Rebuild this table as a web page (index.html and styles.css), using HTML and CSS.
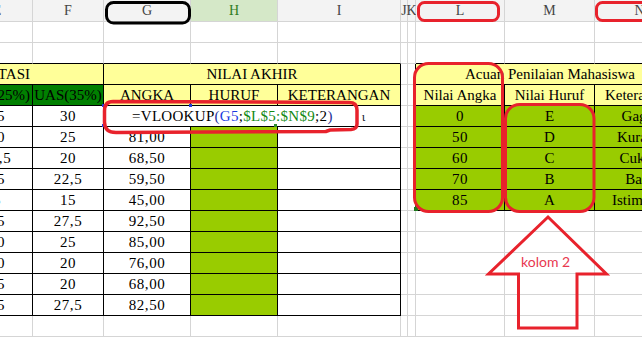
FILE: index.html
```html
<!DOCTYPE html>
<html>
<head>
<meta charset="utf-8">
<link rel="stylesheet" href="styles.css">
</head>
<body>
<div class="sheet">
  <!-- header row -->
  <div class="c hd">E</div><div class="c hd">F</div><div class="c hd">G</div><div class="c hd sel">H</div><div class="c hd">I</div><div class="c hd">J</div><div class="c hd">K</div><div class="c hd">L</div><div class="c hd">M</div><div class="c hd">N</div>
  <!-- row 1 -->
  <div class="c"></div><div class="c"></div><div class="c"></div><div class="c"></div><div class="c"></div><div class="c"></div><div class="c"></div><div class="c"></div><div class="c"></div><div class="c"></div>
  <!-- row 2 -->
  <div class="c kb"></div><div class="c kb"></div><div class="c kb"></div><div class="c kb"></div><div class="c kb"></div><div class="c"></div><div class="c"></div><div class="c kb"></div><div class="c kb"></div><div class="c kb"></div>
  <!-- row 3 -->
  <div class="c k y s2 tail">PRESENTASI</div><div class="c k y s3">NILAI AKHIR</div><div class="c"></div><div class="c kr"></div><div class="c k y s3">Acuan Penilaian Mahasiswa</div>
  <!-- row 4 -->
  <div class="c k dg">UTS(25%)</div><div class="c k dg">UAS(35%)</div><div class="c k y">ANGKA</div><div class="c k y">HURUF</div><div class="c k y">KETERANGAN</div><div class="c"></div><div class="c kr"></div><div class="c k y">Nilai Angka</div><div class="c k y">Nilai Huruf</div><div class="c k y">Keterangan</div>
  <!-- row 5 -->
  <div class="c k num">15</div><div class="c k num">30</div><div class="c k s3 edit">=VLOOKUP<span class="par">(</span><span class="ref1">G5</span>;<span class="ref2">$L$5:$N$9</span>;2<span class="par">)</span><span class="cur">ι</span></div><div class="c"></div><div class="c kg"></div><div class="c k g num">0</div><div class="c k g">E</div><div class="c k g">Gagal</div>
  <!-- row 6 -->
  <div class="c k num">20</div><div class="c k num">25</div><div class="c k num">81,00</div><div class="c k g"></div><div class="c k"></div><div class="c"></div><div class="c kg"></div><div class="c k g num">50</div><div class="c k g">D</div><div class="c k g">Kurang</div>
  <!-- row 7 -->
  <div class="c k num">12,5</div><div class="c k num">20</div><div class="c k num">68,50</div><div class="c k g"></div><div class="c k"></div><div class="c"></div><div class="c kg"></div><div class="c k g num">60</div><div class="c k g">C</div><div class="c k g">Cukup</div>
  <!-- row 8 -->
  <div class="c k num">15</div><div class="c k num">22,5</div><div class="c k num">59,50</div><div class="c k g"></div><div class="c k"></div><div class="c"></div><div class="c kg"></div><div class="c k g num">70</div><div class="c k g">B</div><div class="c k g">Baik</div>
  <!-- row 9 -->
  <div class="c k num">5</div><div class="c k num">15</div><div class="c k num">45,00</div><div class="c k g"></div><div class="c k"></div><div class="c"></div><div class="c kg"></div><div class="c k g num">85</div><div class="c k g">A</div><div class="c k g">Istimewa</div>
  <!-- row 10 -->
  <div class="c k num">15</div><div class="c k num">27,5</div><div class="c k num">92,50</div><div class="c k g"></div><div class="c k"></div><div class="c"></div><div class="c"></div><div class="c"></div><div class="c"></div><div class="c"></div>
  <!-- row 11 -->
  <div class="c k num">20</div><div class="c k num">25</div><div class="c k num">85,00</div><div class="c k g"></div><div class="c k"></div><div class="c"></div><div class="c"></div><div class="c"></div><div class="c"></div><div class="c"></div>
  <!-- row 12 -->
  <div class="c k num">20</div><div class="c k num">20</div><div class="c k num">76,00</div><div class="c k g"></div><div class="c k"></div><div class="c"></div><div class="c"></div><div class="c"></div><div class="c"></div><div class="c"></div>
  <!-- row 13 -->
  <div class="c k num">15</div><div class="c k num">20</div><div class="c k num">68,00</div><div class="c k g"></div><div class="c k"></div><div class="c"></div><div class="c"></div><div class="c"></div><div class="c"></div><div class="c"></div>
  <!-- row 14 -->
  <div class="c k num">15</div><div class="c k num">27,5</div><div class="c k num">82,50</div><div class="c k g"></div><div class="c k"></div><div class="c"></div><div class="c"></div><div class="c"></div><div class="c"></div><div class="c"></div>
  <!-- row 15 -->
  <div class="c"></div><div class="c"></div><div class="c"></div><div class="c"></div><div class="c"></div><div class="c"></div><div class="c"></div><div class="c"></div><div class="c"></div><div class="c"></div>
</div>

<svg class="ann" width="642" height="337" viewBox="0 0 642 337">
  <rect x="102" y="104" width="3" height="3" fill="#1f3fe0"/>
  <rect x="102" y="124" width="3" height="3" fill="#1f3fe0"/>
  <rect x="189" y="104" width="3" height="3" fill="#1f3fe0"/>
  <rect x="274" y="124" width="3" height="3" fill="#2e8b2e"/>
  <rect x="414" y="207" width="4" height="4" fill="#1d7a1d"/>
  <rect x="106.5" y="2.5" width="83" height="20.5" rx="7" fill="none" stroke="#000" stroke-width="3"/>
  <rect x="418.5" y="2.5" width="80" height="18" rx="6" fill="none" stroke="#e8222c" stroke-width="3"/>
  <rect x="596.5" y="2.5" width="80" height="18" rx="6" fill="none" stroke="#e8222c" stroke-width="3"/>
  <path d="M113 101.5 L349 102.5 Q357 102.5 357 110 L357 124 Q357 129 351 129.5 L330 130 L326 131.5 L116 132.5 Q104.5 132.5 104.5 122 L104.5 111 Q104.5 101.5 113 101.5 Z" fill="none" stroke="#e8222c" stroke-width="3.5"/>
  <rect x="414.5" y="63.5" width="88" height="148" rx="14" fill="none" stroke="#e8222c" stroke-width="3"/>
  <rect x="505.5" y="104.5" width="88.5" height="107" rx="14" fill="none" stroke="#e8222c" stroke-width="3"/>
  <path d="M548 217 L488.5 274 L518.5 274 L518.5 328 L577 328 L577 274 L606.5 274 Z" fill="none" stroke="#e8222c" stroke-width="3"/>
  <text x="521" y="267" class="lbl">kolom 2</text>
</svg>
</body>
</html>
```
FILE: styles.css
```css
* { box-sizing: border-box; }
html, body { margin: 0; padding: 0; }
body {
  width: 642px;
  height: 337px;
  overflow: hidden;
  background: #fff;
  position: relative;
  font-family: "Liberation Serif", "Times New Roman", serif;
}
.sheet {
  display: grid;
  grid-template-columns: 71px 71px 87px 87px 123px 7px 8px 89px 90px 90px;
  grid-template-rows: 22px repeat(15, 21px);
  width: 723px;
  margin-left: -38px;
}
.c {
  border-right: 1px solid #d5d5d5;
  border-bottom: 1px solid #d5d5d5;
  display: flex;
  align-items: flex-end;
  justify-content: center;
  font-size: 15px;
  line-height: 19px;
  white-space: nowrap;
  color: #000;
  background: #fff;
}
.hd {
  background: #f3f3f3;
  color: #444;
  font-size: 14px;
  line-height: 20px;
  align-items: center;
  padding-top: 1px;
}
.hd.sel { background: #d5e8c8; color: #2f7d1f; }
.k { border-right-color: #000; border-bottom-color: #000; }
.kb { border-bottom-color: #000; }
.kr { border-right-color: #000; }
.kg { border-right-color: #1c6f1c; }
.y { background: #ffff99; }
.dg { background: #008000; }
.g { background: #99cc00; }
.s2 { grid-column: span 2; }
.s3 { grid-column: span 3; }
.num { letter-spacing: 0.6px; }
.tail { justify-content: flex-end; padding-right: 73px; }
.edit { justify-content: flex-start; padding-left: 28px; letter-spacing: 0.3px; }
.ref1 { color: #1a3be0; }
.ref2 { color: #138a13; }
.par { color: #26329a; }
.cur { font-size: 13px; margin-left: 29px; color: #223; }
.ann {
  position: absolute;
  left: 0;
  top: 0;
  pointer-events: none;
}
.lbl {
  font-family: Lato, "Open Sans", sans-serif;
  font-size: 14px;
  fill: #e8384f;
}
```
